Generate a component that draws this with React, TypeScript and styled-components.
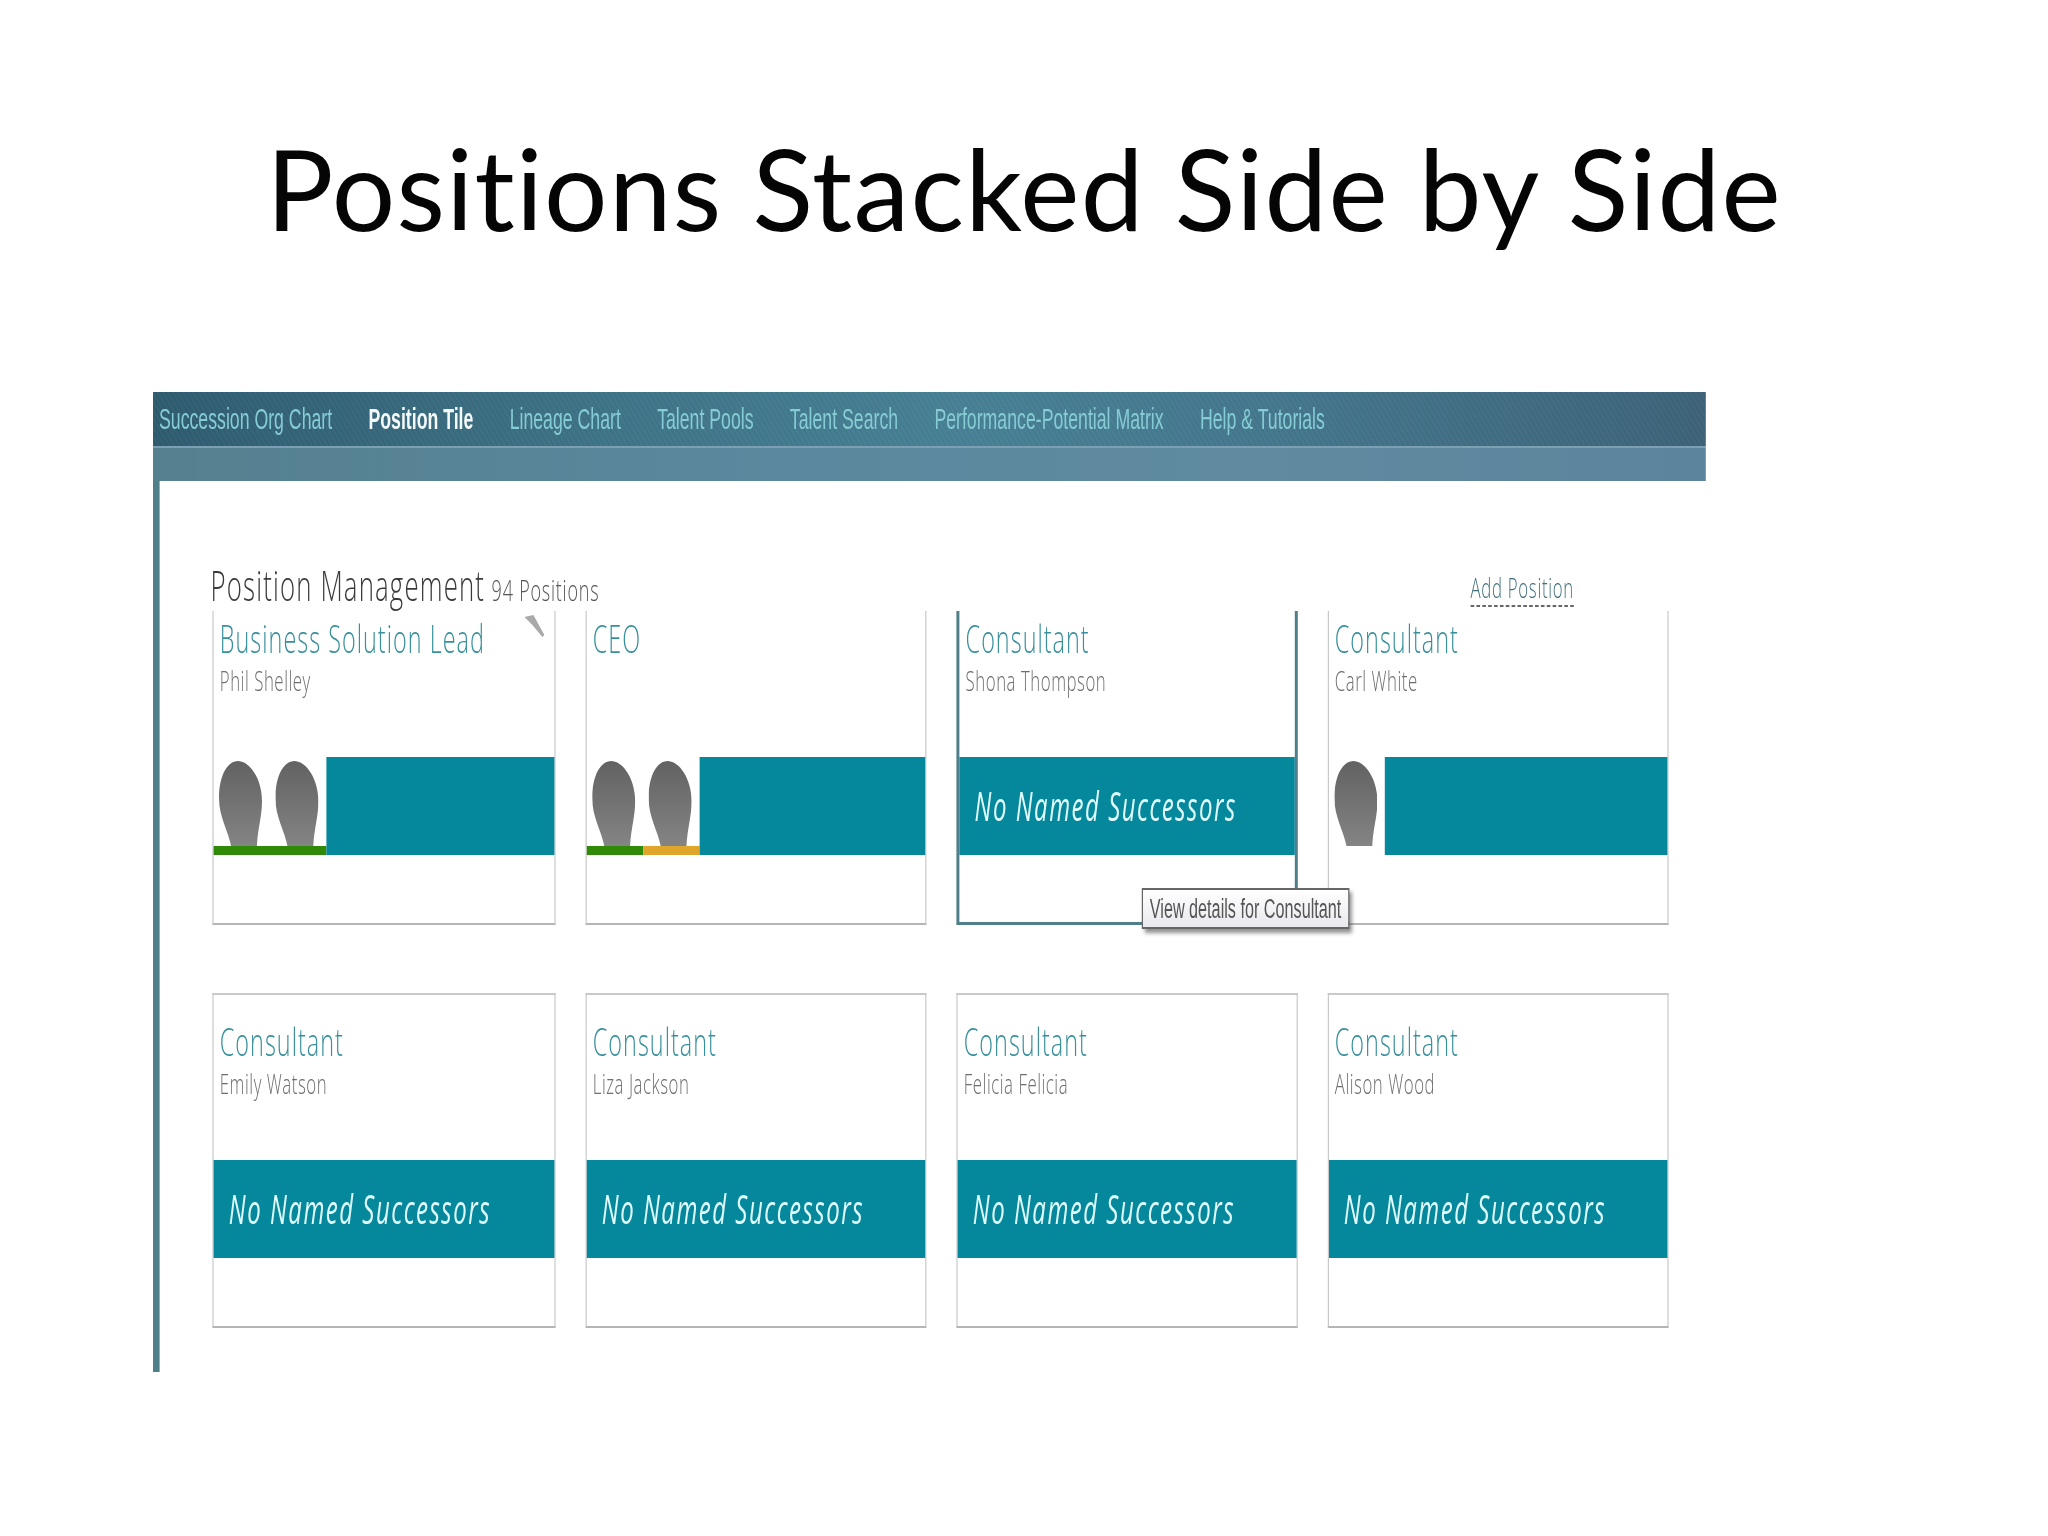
import { FC } from "react";
import styled, { createGlobalStyle } from "styled-components";

// the app capture in the slide is squeezed sideways, so the panel is laid out wide and scaled back
const K = 0.6;
const w = (n: number) => `${n / K}px`;

const Global = createGlobalStyle`
  html, body { margin: 0; padding: 0; background: #fff; overflow: hidden; }
`;

const Slide = styled.div`
  width: 2048px;
  height: 1536px;
  overflow: hidden;
  display: flex;
  flex-direction: column;
  background: #fff;
`;
const SlideTitle = styled.h1`
  margin: 0;
  height: 392px;
  box-sizing: border-box;
  padding-top: 124px;
  text-align: center;
  font: 400 112px/128px Lato, "Open Sans", sans-serif;
  font-variant-ligatures: none;
  letter-spacing: 1.3px;
  color: #050505;
`;
const Capture = styled.div`
  width: ${w(1553)};
  height: 980px;
  margin-left: 153px;
  display: flex;
  flex-direction: column;
  transform: scaleX(${K});
  transform-origin: 0 0;
  filter: blur(0.7px);
`;
const NavBar = styled.nav`
  height: 54px;
  flex: none;
  display: flex;
  align-items: center;
  gap: ${w(36.3)};
  padding-left: ${w(6)};
  box-sizing: border-box;
  background:
    repeating-linear-gradient(45deg, rgba(255, 255, 255, 0.02) 0 3px, rgba(0, 0, 0, 0.02) 3px 6px),
    linear-gradient(90deg, #2f5c70 0%, #3f7488 30%, #478095 52%, #44778e 72%, #3d6379 100%);
`;
const NavItem = styled.a<{ $active?: boolean }>`
  font: ${(p) => (p.$active ? 700 : 400)} 29.5px/36px "Liberation Sans", sans-serif;
  color: ${(p) => (p.$active ? "#f4f8f8" : "#86ccd4")};
  white-space: nowrap;
`;
const SubBar = styled.div`
  height: 35px;
  flex: none;
  box-sizing: border-box;
  border-top: 2px solid #7c9fb3;
  background: linear-gradient(90deg, #54808f 0%, #5b889e 40%, #5f8aa0 70%, #5a859c 100%);
`;
const Body = styled.main`
  flex: 1;
  min-height: 0;
  display: flex;
  flex-direction: column;
  border-left: ${w(7)} solid #4f7f8a;
  background: #fff;
`;
const Header = styled.header`
  height: 130px;
  flex: none;
  display: flex;
  justify-content: space-between;
  align-items: flex-end;
  box-sizing: border-box;
  padding: 0 ${w(132)} 0 ${w(51)};
`;
const Heading = styled.div`
  font: 300 43px/52px "Open Sans", sans-serif;
  letter-spacing: 1.9px;
  color: #3a3a3a;
  margin-bottom: -5px;
`;
const Count = styled.span`
  font-size: 30px;
  letter-spacing: 1.3px;
  color: #555;
  margin-left: ${w(6.5)};
`;
const AddLink = styled.a`
  font: 300 28px/34px "Open Sans", sans-serif;
  letter-spacing: 1.2px;
  color: #3f6f7c;
  padding-bottom: 1px;
  border-bottom: 2px dashed #666;
  margin-bottom: 4px;
`;
const Viewport = styled.div`
  flex: 1;
  min-height: 0;
  overflow: hidden;
`;
const Grid = styled.div`
  display: grid;
  grid-template-columns: ${w(343)} repeat(3, ${w(341)});
  column-gap: ${w(30)};
  row-gap: 68px;
  margin: -21px 0 0 ${w(53)};
`;
const Card = styled.article<{ $selected?: boolean }>`
  position: relative;
  height: 335px;
  box-sizing: border-box;
  display: flex;
  flex-direction: column;
  background: #fff;
  padding-top: 27px;
  border-style: solid;
  border-color: ${(p) => (p.$selected ? "#4f7f8a" : "#c9c9cc")};
  border-width: 2px ${(p) => (p.$selected ? w(3) : w(1.5))};
  border-bottom: ${(p) => (p.$selected ? "3px solid #4f7f8a" : "2px solid #b5b5b8")};
`;
const CardTitle = styled.div`
  font: 300 39px/38px "Open Sans", sans-serif;
  letter-spacing: 1.7px;
  color: #36909b;
  padding-left: ${w(6)};
  white-space: nowrap;
`;
const CardName = styled.div`
  font: 300 28px/30px "Open Sans", sans-serif;
  letter-spacing: 0.9px;
  color: #6e6e6e;
  padding-left: ${w(6)};
  margin-top: 8px;
`;
const Band = styled.div<{ $selected?: boolean }>`
  display: flex;
  height: 98px;
  margin-top: auto;
  margin-bottom: ${(p) => (p.$selected ? 67 : 68)}px;
`;
const Slot = styled.div`
  width: ${w(56.3)};
  flex: none;
  display: flex;
  flex-direction: column;
  justify-content: flex-end;
`;
const Figure = styled.svg`
  display: block;
  width: ${w(43)};
  height: 85px;
  margin-left: ${w(5.5)};
`;
const Strip = styled.div<{ $color: string }>`
  height: 9px;
  background: ${(p) => p.$color};
`;
const Fill = styled.div`
  flex: 1;
  display: flex;
  align-items: center;
  padding-left: ${w(15)};
  background: #06889c;
  font: italic 400 40px/44px "Open Sans", sans-serif;
  letter-spacing: 2.5px;
  color: #dffcff;
  white-space: nowrap;
`;
const Tooltip = styled.div`
  position: absolute;
  z-index: 2;
  left: ${w(182)};
  top: 296px;
  height: 41px;
  box-sizing: border-box;
  display: flex;
  align-items: center;
  padding: 0 ${w(7)};
  border: 2px solid #666;
  background: linear-gradient(#fff, #e9e9ee);
  box-shadow: ${w(3)} 4px 5px rgba(70, 70, 70, 0.6);
  font: 400 27px/30px "Liberation Sans", sans-serif;
  color: #555;
  white-space: nowrap;
`;
const Pin = styled.svg`
  position: absolute;
  top: 23px;
  right: ${w(10)};
  width: ${w(20)};
  height: 22px;
`;

const Person: FC = () => (
  <Figure viewBox="0 0 42 85" preserveAspectRatio="none">
    <defs>
      <linearGradient id="fig" x1="0" y1="0" x2="0" y2="1">
        <stop offset="0" stopColor="#626262" />
        <stop offset="1" stopColor="#848484" />
      </linearGradient>
    </defs>
    <path d="M18.5 0C30 0 42 18 42 40C42 56 38 66 37 85L11.8 85C9 70 0 56 0 37C0 15 8 0 18.5 0Z" fill="url(#fig)" />
  </Figure>
);

type Position = {
  title: string;
  name?: string;
  strips?: (string | null)[];
  selected?: boolean;
  pin?: boolean;
};

const GREEN = "#2f8a08";
const AMBER = "#e0a62c";

const positions: Position[] = [
  { title: "Business Solution Lead", name: "Phil Shelley", strips: [GREEN, GREEN], pin: true },
  { title: "CEO", strips: [GREEN, AMBER] },
  { title: "Consultant", name: "Shona Thompson", selected: true },
  { title: "Consultant", name: "Carl White", strips: [null] },
  { title: "Consultant", name: "Emily Watson" },
  { title: "Consultant", name: "Liza Jackson" },
  { title: "Consultant", name: "Felicia Felicia" },
  { title: "Consultant", name: "Alison Wood" },
];

const tabs = [
  "Succession Org Chart",
  "Position Tile",
  "Lineage Chart",
  "Talent Pools",
  "Talent Search",
  "Performance-Potential Matrix",
  "Help & Tutorials",
];

export default function App() {
  return (
    <Slide>
      <Global />
      <SlideTitle>Positions Stacked Side by Side</SlideTitle>
      <Capture>
        <NavBar>
          {tabs.map((t) => (
            <NavItem key={t} $active={t === "Position Tile"}>
              {t}
            </NavItem>
          ))}
        </NavBar>
        <SubBar />
        <Body>
          <Header>
            <Heading>
              Position Management<Count>94 Positions</Count>
            </Heading>
            <AddLink>Add Position</AddLink>
          </Header>
          <Viewport>
            <Grid>
              {positions.map((p, i) => (
                <Card key={i} $selected={p.selected}>
                  <CardTitle>{p.title}</CardTitle>
                  <CardName>{p.name ?? "\u00a0"}</CardName>
                  {p.pin && (
                    <Pin viewBox="0 0 20 22" preserveAspectRatio="none">
                      <path d="M0 2L9 0L20 20L18 22L8 10Z" fill="#a9a9a9" />
                    </Pin>
                  )}
                  <Band $selected={p.selected}>
                    {p.strips?.map((c, j) => (
                      <Slot key={j}>
                        <Person />
                        <Strip $color={c ?? "transparent"} />
                      </Slot>
                    ))}
                    <Fill>{p.strips ? "" : "No Named Successors"}</Fill>
                  </Band>
                  {p.selected && <Tooltip>View details for Consultant</Tooltip>}
                </Card>
              ))}
            </Grid>
          </Viewport>
        </Body>
      </Capture>
    </Slide>
  );
}
